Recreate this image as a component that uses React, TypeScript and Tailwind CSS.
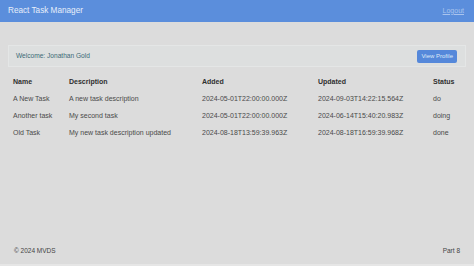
import React from "react";

const rows = [
  { name: "A New Task", desc: "A new task description", added: "2024-05-01T22:00:00.000Z", updated: "2024-09-03T14:22:15.564Z", status: "do" },
  { name: "Another task", desc: "My second task", added: "2024-05-01T22:00:00.000Z", updated: "2024-06-14T15:40:20.983Z", status: "doing" },
  { name: "Old Task", desc: "My new task description updated", added: "2024-08-18T13:59:39.963Z", updated: "2024-08-18T16:59:39.968Z", status: "done" },
];

export default function App() {
  return (
    <div className="w-[474px] h-[266px] flex flex-col bg-[#dcdcdc] text-[#333] overflow-hidden" style={{ fontFamily: '"Liberation Sans", Arial, sans-serif' }}>
      <header className="h-[22px] shrink-0 bg-[#5b8edc] flex items-center justify-between px-[8px]">
        <span className="text-[8.2px] text-[#e8eefa]">React Task Manager</span>
        <span className="text-[7px] text-[#a9c4ee] underline mr-[2px]">Logout</span>
      </header>
      <main className="flex-1 px-[8px] pt-[23px]">
        <div className="h-[22px] border border-[#e4e6e6] bg-[#dddfdf] flex items-center justify-between pl-[7px] pr-[8px]">
          <span className="text-[6.6px] text-[#3a6a76]">Welcome: Jonathan Gold</span>
          <span className="h-[13px] px-[4px] bg-[#5588da] rounded-[2px] text-[6px] text-[#dfe8f8] flex items-center">View Profile</span>
        </div>
        <table className="w-full mt-[7px] text-[7px] text-[#4a4a4a] border-collapse">
          <thead>
            <tr className="h-[17px] text-[#2f2f2f]">
              <th className="text-left font-bold pl-[5px] w-[61px]">Name</th>
              <th className="text-left font-bold w-[133px]">Description</th>
              <th className="text-left font-bold w-[116px]">Added</th>
              <th className="text-left font-bold w-[115px]">Updated</th>
              <th className="text-left font-bold">Status</th>
            </tr>
          </thead>
          <tbody>
            {rows.map((r) => (
              <tr key={r.name} className="h-[17px]">
                <td className="pl-[5px]">{r.name}</td>
                <td>{r.desc}</td>
                <td>{r.added}</td>
                <td>{r.updated}</td>
                <td>{r.status}</td>
              </tr>
            ))}
          </tbody>
        </table>
      </main>
      <footer className="h-[26px] shrink-0 flex items-center justify-between px-[14px] pb-[2px] text-[6.5px] text-[#444] border-b-[2px] border-[#e6e6e6]">
        <span>© 2024 MVDS</span>
        <span>Part 8</span>
      </footer>
    </div>
  );
}
